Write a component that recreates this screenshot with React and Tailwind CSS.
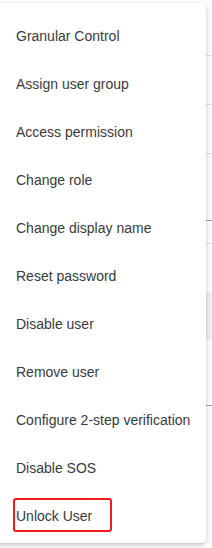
import React from 'react';

const items = [
  'Granular Control',
  'Assign user group',
  'Access permission',
  'Change role',
  'Change display name',
  'Reset password',
  'Disable user',
  'Remove user',
  'Configure 2-step verification',
  'Disable SOS',
  'Unlock User',
];

function Backdrop() {
  // table rows peeking out behind the menu
  return (
    <div className="flex flex-col">
      <div className="h-[56px] border-b border-[#e0e0e0]" />
      <div className="h-[49px] border-b border-[#e0e0e0]" />
      <div className="h-[49px] border-b border-[#e0e0e0]" />
      <div className="h-[67px] border-b border-[#9e9e9e]" />
      <div className="h-[23px] border-b border-[#e8e8e8]" />
      <div className="h-[48px]" />
      <div className="h-[48px] bg-[#f2f2f2]" />
      <div className="h-[66px] border-b border-[#9e9e9e]" />
    </div>
  );
}

export default function App() {
  return (
    <div
      className="relative w-[212px] h-[548px] overflow-hidden bg-white"
      style={{ fontFamily: '"Liberation Sans", Arial, sans-serif' }}
    >
      <Backdrop />
      <div className="absolute left-[-6px] top-[3px] w-[212px] rounded-[4px] bg-white pt-[9px] pb-[3px] shadow-[0_2px_6px_rgba(0,0,0,0.2),0_1px_2px_rgba(0,0,0,0.08)]">
        <ul>
          {items.map((label) => (
            <li
              key={label}
              className="relative flex h-[48px] items-center pl-[22px] text-[14px] text-[#3a3a3a] whitespace-nowrap"
            >
              {label}
              {label === 'Unlock User' && (
                <span className="absolute left-[19px] top-[6px] h-[34px] w-[99px] rounded-[3px] border-2 border-[#f01c1c]" />
              )}
            </li>
          ))}
        </ul>
      </div>
    </div>
  );
}
